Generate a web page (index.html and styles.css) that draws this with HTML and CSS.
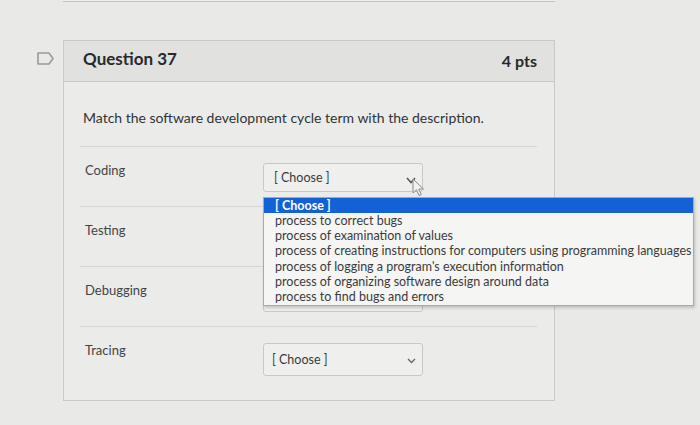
FILE: index.html
```html
<!DOCTYPE html>
<html lang="en">
<head>
  <meta charset="UTF-8" />
  <title>Question 37</title>
  <link rel="stylesheet" href="styles.css">
</head>
<body>

<div class="prev-card"></div>

<div class="question-wrap">
  <div class="gutter">
    <svg class="flag" width="17" height="13" viewBox="0 0 17 13">
      <path d="M1 1 H12 L16 6.5 L12 12 H1 Z" fill="none" stroke="#9a9a9a" stroke-width="1.6" stroke-linejoin="round"/>
    </svg>
  </div>

  <div class="question">
    <div class="header">
      <span class="name">Question 37</span>
      <span class="pts">4 pts</span>
    </div>

    <div class="body">
      <p class="prompt">Match the software development cycle term with the description.</p>

      <div class="row">
        <div class="term">Coding</div>
        <div class="select open">
          <span>[ Choose ]</span>
          <svg class="chev" width="10" height="7" viewBox="0 0 10 7"><path d="M1 1 L5 5.5 L9 1" fill="none" stroke="#555" stroke-width="1.5"/></svg>
          <svg class="cursor" width="13" height="19" viewBox="0 0 13 19">
            <path d="M1 1 V15 L4.5 11.8 L7 17.5 L9.3 16.5 L6.8 11 H11.5 Z" fill="#f2f2f2" stroke="#8a8a8a" stroke-width="1"/>
          </svg>
          <ul class="options">
            <li class="selected">[ Choose ]</li>
            <li>process to correct bugs</li>
            <li>process of examination of values</li>
            <li>process of creating instructions for computers using programming languages</li>
            <li>process of logging a program's execution information</li>
            <li>process of organizing software design around data</li>
            <li>process to find bugs and errors</li>
          </ul>
        </div>
      </div>

      <!-- these two selects sit under the open list -->
      <div class="row">
        <div class="term">Testing</div>
        <div class="select"></div>
      </div>

      <div class="row">
        <div class="term">Debugging</div>
        <div class="select"></div>
      </div>

      <div class="row last">
        <div class="term">Tracing</div>
        <div class="select tall">
          <span>[ Choose ]</span>
          <svg class="chev" width="9" height="6" viewBox="0 0 9 6"><path d="M1 1 L4.5 4.5 L8 1" fill="none" stroke="#666" stroke-width="1.3"/></svg>
        </div>
      </div>
    </div>
  </div>
</div>

</body>
</html>
```

FILE: styles.css
```css
body {
  margin: 0;
  font-family: Lato, "Open Sans", sans-serif;
  background-color: #e9e9e8;
  color: #2f3437;
}
.prev-card {
  margin-left: 63px;
  width: 492px;
  height: 1px;
  border-bottom: 1px solid #c4c4c4;
  background: #ededec;
}
.question-wrap {
  display: flex;
  margin-top: 38px;
}
.gutter {
  width: 63px;
  padding: 12px 0 0 37px;
  box-sizing: border-box;
}
.flag {
  display: block;
}
.question {
  width: 492px;
  border: 1px solid #c9c9c8;
  background: #ebebea;
  box-sizing: border-box;
}
.header {
  height: 40px;
  display: flex;
  align-items: center;
  justify-content: space-between;
  padding: 0 17px 0 19px;
  background: #e1e1e0;
  border-bottom: 1px solid #c9c9c8;
  font-size: 17px;
  color: #262a2c;
}
.header .name {
  font-weight: 700;
  margin-top: -6px;
}
.header .pts {
  font-weight: 700;
  font-size: 16px;
  margin-top: -1px;
}
.body {
  padding: 0 17px 14px 16px;
}
.prompt {
  margin: 0;
  padding: 27px 0 20px 3px;
  font-size: 14px;
  border-bottom: 1px solid #d6d6d5;
}
.row {
  height: 59px;
  display: flex;
  align-items: flex-start;
  border-bottom: 1px solid #d6d6d5;
}
.row.last {
  border-bottom: none;
}
.term {
  width: 183px;
  padding: 15px 0 0 5px;
  box-sizing: border-box;
  font-size: 13px;
  color: #444;
}
.select {
  position: relative;
  margin-top: 16px;
  width: 160px;
  height: 29px;
  border: 1px solid #c8c8c7;
  border-radius: 3px;
  background: #efefee;
  box-sizing: border-box;
  font-size: 12.5px;
  color: #3a3a3a;
  display: flex;
  align-items: center;
  padding-left: 10px;
}
.select.tall {
  height: 33px;
  padding-left: 8px;
}
.chev {
  position: absolute;
  right: 6px;
  top: 13px;
}
.select.tall .chev {
  top: 14px;
}
.cursor {
  position: absolute;
  right: -3px;
  top: 14px;
}
.options {
  position: absolute;
  left: -1px;
  top: 33px;
  width: 429px;
  margin: 0;
  padding: 0 0 1px 0;
  list-style: none;
  background: #f5f5f4;
  border: 1px solid #a9a9a9;
  box-shadow: 1px 2px 3px rgba(0,0,0,0.18);
  z-index: 2;
}
.options li {
  padding-left: 11px;
  font-size: 12.5px;
  line-height: 15.2px;
  color: #3b3b3b;
  white-space: nowrap;
}
.options li.selected {
  background: #1261d6;
  color: #fff;
  font-weight: 700;
  line-height: 15px;
}
```
